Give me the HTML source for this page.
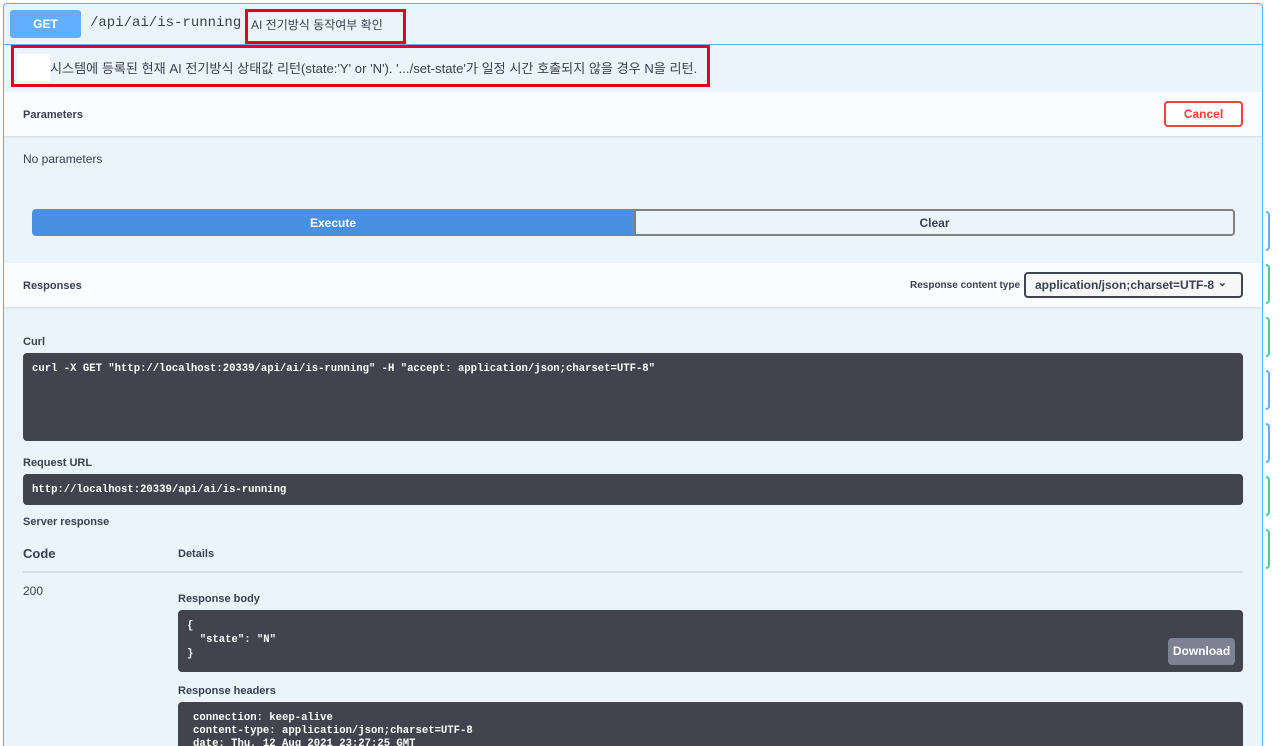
<!DOCTYPE html>
<html><head><meta charset="utf-8"><style>
*{margin:0;padding:0;box-sizing:border-box}
html{overflow:hidden;height:746px}
body{width:1280px;height:746px;overflow:hidden;background:#fff;font-family:"Liberation Sans","Noto Sans CJK KR",sans-serif;color:#3b4151;position:relative}
.a{position:absolute}
.mono{font-family:"Liberation Mono","DejaVu Sans Mono",monospace}
.b{font-weight:bold}
.dark{background:#41444e;border-radius:4px;color:#fff}
.lbl{font-size:11px;font-weight:bold;color:#3b4151}
.br{position:absolute;left:1266px;width:4px;height:40px;border-width:2px 2px 2px 0;border-style:solid;border-radius:0 4px 4px 0}
</style></head><body>
<div class="a" style="left:3px;top:3px;width:1260px;height:743px;background:#ebf3fb;border:1px solid #61affe;border-bottom:none;border-radius:4px 4px 0 0"></div>
<div class="a" style="left:4px;top:44px;width:1258px;height:1px;background:#61affe"></div>
<div class="a b" style="left:10px;top:10px;width:71px;height:28px;background:#61affe;border-radius:3px;color:#fff;font-size:12px;text-align:center;line-height:28px">GET</div>
<div class="a mono" style="left:90px;top:15px;font-size:14px;color:#3b4151">/api/ai/is-running</div>
<div class="a" style="left:245px;top:9px;width:161px;height:35px;border:3px solid #e4001e"></div>
<div class="a" style="left:251px;top:16px;font-size:12px;color:#3b4151">AI 전기방식 동작여부 확인</div>
<div class="a" style="left:11px;top:45px;width:699px;height:42px;border:3px solid #e4001e"></div>
<div class="a" style="left:17px;top:54px;width:33px;height:27px;background:#fff"></div>
<div class="a" style="left:50px;top:58px;font-size:13.1px;color:#3b4151;white-space:nowrap">시스템에 등록된 현재 AI 전기방식 상태값 리턴(state:'Y' or 'N'). '.../set-state'가 일정 시간 호출되지 않을 경우 N을 리턴.</div>

<div class="a" style="left:4px;top:92px;width:1258px;height:44px;background:#fafcfe;box-shadow:0 1px 2px rgba(0,0,0,.1)"></div>
<div class="a b" style="left:23px;top:109px;font-size:11px">Parameters</div>
<div class="a b" style="left:1164px;top:101px;width:79px;height:26px;border:2px solid #f93e3e;border-radius:4px;color:#f93e3e;font-size:12px;text-align:center;line-height:22px;background:#fff">Cancel</div>
<div class="a" style="left:23px;top:152px;font-size:12px">No parameters</div>

<div class="a b" style="left:32px;top:209px;width:602px;height:27px;background:#4990e2;border:1px solid #4990e2;border-radius:4px 0 0 4px;color:#fff;font-size:12px;text-align:center;line-height:27px">Execute</div>
<div class="a b" style="left:634px;top:209px;width:601px;height:27px;border:2px solid #808080;border-radius:0 4px 4px 0;font-size:12px;text-align:center;line-height:25px">Clear</div>

<div class="a" style="left:4px;top:263px;width:1258px;height:44px;background:#fafcfe;box-shadow:0 1px 2px rgba(0,0,0,.1)"></div>
<div class="a b" style="left:23px;top:280px;font-size:11px">Responses</div>
<div class="a b" style="left:910px;top:280px;font-size:10px">Response content type</div>
<div class="a b" style="left:1024px;top:272px;width:219px;height:26px;border:2px solid #41444e;border-radius:4px;background:#f7f7f7;font-size:12px;line-height:22px;padding-left:9px">application/json;charset=UTF-8<span style="position:absolute;right:14px;top:-2px;font-size:11px">&#8964;</span></div>

<div class="a lbl" style="left:23px;top:336px">Curl</div>
<div class="a dark mono b" style="left:23px;top:353px;width:1220px;height:88px;font-size:10.6px;padding:10px 9px">curl -X GET "http://localhost:20339/api/ai/is-running" -H "accept: application/json;charset=UTF-8"</div>
<div class="a lbl" style="left:23px;top:457px">Request URL</div>
<div class="a dark mono b" style="left:23px;top:474px;width:1220px;height:31px;font-size:10.6px;padding:10px 9px">http://localhost:20339/api/ai/is-running</div>
<div class="a lbl" style="left:23px;top:516px">Server response</div>
<div class="a b" style="left:23px;top:546px;font-size:13px">Code</div>
<div class="a lbl" style="left:178px;top:548px">Details</div>
<div class="a" style="left:23px;top:571px;width:1220px;height:2px;background:#d8dde5"></div>
<div class="a" style="left:23px;top:584px;font-size:12px">200</div>
<div class="a lbl" style="left:178px;top:593px">Response body</div>
<div class="a dark mono b" style="left:178px;top:610px;width:1065px;height:62px;font-size:10.6px;padding:9px 9px;line-height:14px;white-space:pre">{
  "state": "N"
}</div>
<div class="a b" style="left:1168px;top:638px;width:67px;height:27px;background:#7d8293;border-radius:4px;color:#fff;font-size:12px;text-align:center;line-height:27px">Download</div>
<div class="a lbl" style="left:178px;top:685px">Response headers</div>
<div class="a dark mono b" style="left:178px;top:702px;width:1065px;height:44px;border-radius:4px 4px 0 0;font-size:10.6px;padding:10px 15px;line-height:13px;white-space:pre;overflow:hidden">connection: keep-alive
content-type: application/json;charset=UTF-8
date: Thu, 12 Aug 2021 23:27:25 GMT</div>

<div class="br" style="top:211px;border-color:#61affe"></div>
<div class="br" style="top:264px;border-color:#49cc90"></div>
<div class="br" style="top:317px;border-color:#49cc90"></div>
<div class="br" style="top:370px;border-color:#61affe"></div>
<div class="br" style="top:423px;border-color:#61affe"></div>
<div class="br" style="top:476px;border-color:#49cc90"></div>
<div class="br" style="top:529px;border-color:#49cc90"></div>
</body></html>
